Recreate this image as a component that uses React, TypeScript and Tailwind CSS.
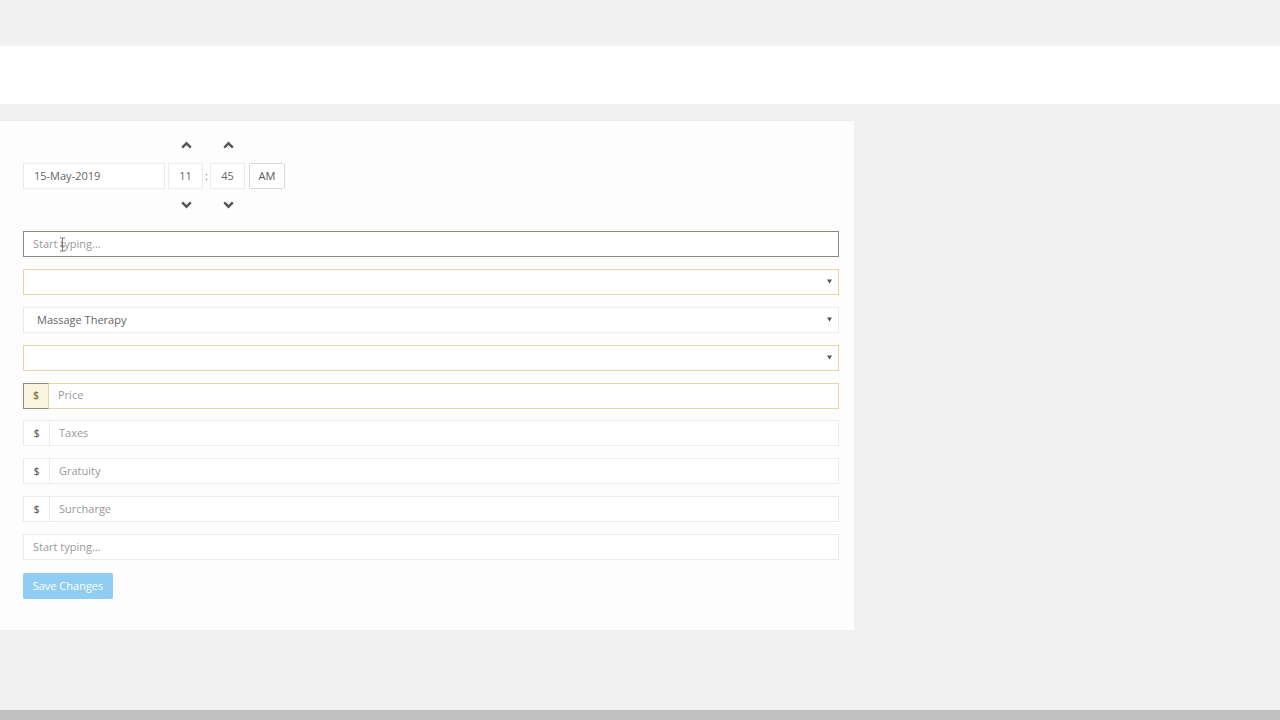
import React from "react";

const font = { fontFamily: '"Open Sans", "Noto Sans", sans-serif' };

function ChevronUp() {
  return (
    <svg width="11" height="8" viewBox="0 0 11 8" className="block translate-x-[1px]">
      <path d="M1.2 6.6 L5.5 2.3 L9.8 6.6" fill="none" stroke="#555" strokeWidth="2.4" />
    </svg>
  );
}

function ChevronDown() {
  return (
    <svg width="11" height="8" viewBox="0 0 11 8" className="block translate-x-[1px]">
      <path d="M1.2 1.4 L5.5 5.7 L9.8 1.4" fill="none" stroke="#555" strokeWidth="2.4" />
    </svg>
  );
}

function Caret() {
  return (
    <svg width="5" height="5" viewBox="0 0 6 5" className="block">
      <path d="M0 0 H6 L3 5 Z" fill="#555" />
    </svg>
  );
}

// text cursor resting over the first input
function IBeam() {
  return (
    <svg width="7" height="15" viewBox="0 0 7 15" className="absolute left-[35px] top-[5px]">
      <path d="M1 1 H6 M3.5 1 V14 M1 14 H6 M1 9 H6" fill="none" stroke="#777" strokeWidth="1" />
    </svg>
  );
}

function SelectBox({ label, warn }: { label?: string; warn?: boolean }) {
  return (
    <div
      className={`flex h-[26px] items-center justify-between border bg-white pl-[13px] pr-[6px] text-[11px] text-[#666] ${
        warn ? "border-[#ead2ab]" : "border-[#ececec]"
      }`}
    >
      <span>{label ?? ""}</span>
      <Caret />
    </div>
  );
}

function MoneyInput({ placeholder, warn }: { placeholder: string; warn?: boolean }) {
  return (
    <div
      className={`flex h-[26px] border bg-white text-[11px] ${
        warn ? "border-[#ead2ab]" : "border-[#ececec]"
      }`}
    >
      <div
        className={`flex w-[26px] items-center justify-center border-r text-[10px] font-semibold ${
          warn
            ? "-ml-px -my-px border-l border-y border-l-[#8d8a7c] border-y-[#8d8a7c] border-r-[#ead2ab] bg-[#faf3dd] text-[#8a6d3b]"
            : "border-r-[#ececec] bg-white text-[#666]"
        }`}
      >
        $
      </div>
      <div className="flex items-center pl-[9px] text-[#999]">{placeholder}</div>
    </div>
  );
}

function TimeSpinner({ value }: { value: string }) {
  return (
    <div className="flex flex-col items-center">
      <ChevronUp />
      <div className="mt-[14px] flex h-[26px] w-[35px] items-center justify-center border border-[#ececec] bg-white text-[11px] text-[#666]">
        {value}
      </div>
      <div className="mt-[12px]">
        <ChevronDown />
      </div>
    </div>
  );
}

export default function App() {
  return (
    <div className="flex min-h-[720px] flex-col bg-[#f1f1f1]" style={font}>
      <div className="h-[46px]" />
      <div className="h-[58px] bg-white" />
      <div className="h-[17px]" />
      <div className="w-[854px] bg-[#fdfdfd] pl-[23px] pr-[15px] pt-[20px] pb-[31px] shadow-[0_0_1px_rgba(0,0,0,0.06)]">
        {/* date and time picker */}
        <div className="flex items-start">
          <div className="mt-[22px] flex h-[26px] w-[142px] items-center border border-[#ececec] bg-white pl-[10px] text-[11px] text-[#666]">
            15-May-2019
          </div>
          <div className="ml-[3px]">
            <TimeSpinner value="11" />
          </div>
          <div className="mt-[22px] flex h-[26px] w-[7px] items-center justify-center text-[11px] text-[#777]">:</div>
          <TimeSpinner value="45" />
          <div className="ml-[4px] mt-[22px] flex h-[26px] w-[36px] items-center justify-center rounded-[2px] border border-[#d8d8d8] bg-white text-[11px] text-[#555]">
            AM
          </div>
        </div>

        <div className="mt-[22px] flex w-[816px] flex-col gap-[11.9px]">
          <div className="relative flex h-[26px] items-center border border-[#8d8a7c] bg-white pl-[9px] text-[11px] text-[#999]">
            Start typing...
            <IBeam />
          </div>
          <SelectBox warn />
          <SelectBox label="Massage Therapy" />
          <SelectBox warn />
          <MoneyInput placeholder="Price" warn />
          <MoneyInput placeholder="Taxes" />
          <MoneyInput placeholder="Gratuity" />
          <MoneyInput placeholder="Surcharge" />
          <div className="flex h-[26px] items-center border border-[#ececec] bg-white pl-[9px] text-[11px] text-[#999]">
            Start typing...
          </div>
          <div>
            <button className="h-[26px] w-[90px] rounded-[2px] bg-[#8fcdf2] text-[11px] text-white">
              Save Changes
            </button>
          </div>
        </div>
      </div>
      <div className="flex-1" />
      <div className="h-[10px] bg-[#c0c0c0]" />
    </div>
  );
}
